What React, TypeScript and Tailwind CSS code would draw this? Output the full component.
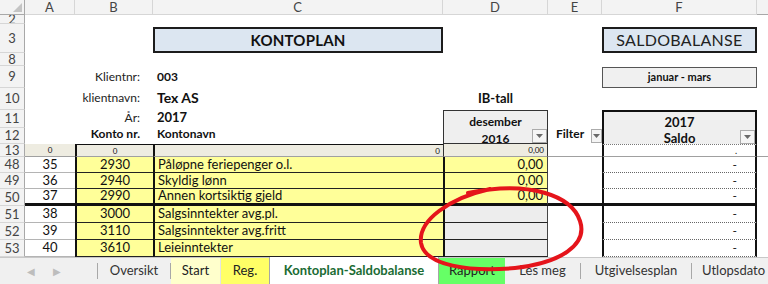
import React from 'react';

const ROWS = [
  { r: 48, a: 35, b: 2930, c: 'Påløpne feriepenger o.l.', d: '0,00' },
  { r: 49, a: 36, b: 2940, c: 'Skyldig lønn', d: '0,00' },
  { r: 50, a: 37, b: 2990, c: 'Annen kortsiktig gjeld', d: '0,00', thick: true },
  { r: 51, a: 38, b: 3000, c: 'Salgsinntekter avg.pl.' },
  { r: 52, a: 39, b: 3110, c: 'Salgsinntekter avg.fritt' },
  { r: 53, a: 40, b: 3610, c: 'Leieinntekter' },
];

const ROW_LABELS = ['2', '3', '8', '9', '10', '11', '12', '13'];

const ROW_START = [
  'row-start-2', 'row-start-3', 'row-start-4', 'row-start-5', 'row-start-6', 'row-start-7', 'row-start-8',
  'row-start-9', 'row-start-10', 'row-start-11', 'row-start-12', 'row-start-13', 'row-start-14', 'row-start-15',
];

function Dropdown() {
  return (
    <div className="w-[15px] h-[14px] border border-[#ababab] bg-[#f5f5f5] flex items-center justify-center">
      <svg width="7" height="4" viewBox="0 0 7 4">
        <path d="M0 0h7L3.5 4z" fill="#6a6a6a" />
      </svg>
    </div>
  );
}

function ColHeader({ label, last }: { label: string; last?: boolean }) {
  return (
    <div
      className={`row-start-1 bg-[#f3f3f3] border-b border-[#a8a8a8] ${last ? '' : 'border-r border-[#d6d6d6]'} flex items-center justify-center text-[13px] leading-none text-[#444]`}
    >
      {label}
    </div>
  );
}

export default function App() {
  const labels = [...ROW_LABELS, ...ROWS.map(r => String(r.r))];

  return (
    <div className="relative w-[768px] h-[284px] overflow-hidden bg-white font-['Lato',sans-serif] text-[#111]">
      {/* Sheet */}
      <div className="grid grid-cols-[25px_50px_78px_290px_105px_54px_155px_11px] grid-rows-[15px_9px_29px_13px_22px_22px_18px_16px_13px_16px_16px_17px_17px_17px_17px] h-[257px]">
        {/* column headers */}
        <div className="row-start-1 col-start-1 bg-[#f3f3f3] border-b border-r border-[#a8a8a8] relative">
          <svg className="absolute right-[2px] bottom-[2px]" width="9" height="9" viewBox="0 0 9 9">
            <path d="M9 0V9H0z" fill="#c4c4c4" />
          </svg>
        </div>
        <ColHeader label="A" />
        <ColHeader label="B" />
        <ColHeader label="C" />
        <ColHeader label="D" />
        <ColHeader label="E" />
        <ColHeader label="F" />
        <ColHeader label="" last />

        {/* row headers */}
        {labels.map((l, i) => (
          <div
            key={l}
            className={`${ROW_START[i]} col-start-1 bg-[#f3f3f3] border-r border-[#a8a8a8] border-b border-b-[#d6d6d6] flex items-center justify-center overflow-hidden text-[13px] leading-none text-[#444]`}
          >
            {l}
          </div>
        ))}

        {/* row 3 */}
        <div className="row-start-3 col-start-4 mt-[3px] border-2 border-[#1c1c1c] bg-[#dce6f1] flex items-center justify-center text-[15px] font-bold tracking-[0.2px]">
          KONTOPLAN
        </div>
        <div className="row-start-3 col-start-7 mt-[3px] border-2 border-[#1c1c1c] bg-[#dce6f1] flex items-center justify-center text-[16px] tracking-[0.3px] text-[#222]">
          SALDOBALANSE
        </div>

        {/* row 9 */}
        <div className="row-start-5 col-start-3 flex items-end justify-end pr-[13px] pb-[2px] text-[12px] text-[#222]">Klientnr:</div>
        <div className="row-start-5 col-start-4 flex items-end pl-[4px] pb-[2px] text-[12px] font-bold">003</div>
        <div className="row-start-5 col-start-7 mt-[1px] border border-[#555] bg-[#f0f0f0] flex items-center justify-center text-[11px] font-bold">
          januar - mars
        </div>

        {/* row 10 */}
        <div className="row-start-6 col-start-3 flex items-end justify-end pr-[13px] pb-[3px] text-[12px] text-[#222]">klientnavn:</div>
        <div className="row-start-6 col-start-4 flex items-end pl-[4px] pb-[2px] text-[14px] font-bold">Tex AS</div>
        <div className="row-start-6 col-start-5 flex items-end justify-center pb-[2px] text-[13px] font-bold">IB-tall</div>

        {/* row 11 */}
        <div className="row-start-7 col-start-3 flex items-end justify-end pr-[13px] pb-[1px] text-[12px] text-[#222]">År:</div>
        <div className="row-start-7 col-start-4 flex items-end pl-[4px] pb-[1px] text-[13px] font-bold">2017</div>

        {/* D header box rows 11-12 */}
        <div className="row-start-7 row-span-2 col-start-5 relative border border-[#333] bg-[#efefef] flex flex-col items-center pt-[2px] text-[12px] font-bold leading-[17px]">
          <span>desember</span>
          <span>2016</span>
          <div className="absolute right-0 bottom-0">
            <Dropdown />
          </div>
        </div>

        {/* F header box rows 11-12 */}
        <div className="row-start-7 row-span-2 col-start-7 relative border-t-2 border-x-2 border-[#111] bg-[#efefef] flex flex-col items-center pt-[2px] text-[13px] font-bold leading-[16px]">
          <span>2017</span>
          <span>Saldo</span>
          <div className="absolute right-0 bottom-0">
            <Dropdown />
          </div>
        </div>

        {/* row 12 */}
        <div className="row-start-8 col-start-3 flex items-end justify-end pr-[13px] pb-[1px] text-[12px] font-bold">Konto nr.</div>
        <div className="row-start-8 col-start-4 flex items-end pl-[4px] pb-[1px] text-[12px] font-bold">Kontonavn</div>
        <div className="row-start-8 col-start-6 flex items-end gap-[7px] pl-[8px] pb-[1px] text-[12px] font-bold">
          <span>Filter</span>
          <Dropdown />
        </div>

        {/* row 13 */}
        <div className="row-start-9 col-start-2 bg-[#eeece1] border-b border-[#a0a0a0] flex items-center justify-center text-[8px]">0</div>
        <div className="row-start-9 col-start-3 bg-[#eeece1] border-l-2 border-t border-[#111] border-b border-b-[#a0a0a0] flex items-center justify-center text-[8px]">0</div>
        <div className="row-start-9 col-start-4 bg-[#eeece1] border-l-2 border-t border-[#111] border-b border-b-[#a0a0a0] flex items-center justify-end pr-[3px] text-[8px]">0</div>
        <div className="row-start-9 col-start-5 bg-[#eeece1] border-l border-r border-[#333] border-b border-b-[#a0a0a0] flex items-center justify-end pr-[3px] text-[8px]">0,00</div>
        <div className="row-start-9 col-start-6 border-b border-[#a0a0a0]" />
        <div className="row-start-9 col-start-7 border-x-2 border-[#111] border-t border-t-[#777] [border-top-style:dotted] border-b border-b-[#a0a0a0] flex items-center justify-end pr-[18px] text-[9px] leading-none">.</div>
        <div className="row-start-9 col-start-8 border-b border-[#a0a0a0]" />

        {/* data rows */}
        {ROWS.map((row, i) => {
          const rs = ROW_START[8 + i];
          const bottom = row.thick ? 'border-b-[3px] border-b-[#111]' : '';
          return (
            <React.Fragment key={row.r}>
              <div className={`${rs} col-start-2 flex items-center justify-center text-[13px] ${row.thick ? bottom : 'border-b border-b-[#b4b4b4]'}`}>{row.a}</div>
              <div className={`${rs} col-start-3 bg-[#ffff99] border-l-2 border-l-[#111] flex items-center justify-center text-[13px] ${row.thick ? bottom : 'border-b border-b-[#222]'}`}>{row.b}</div>
              <div className={`${rs} col-start-4 bg-[#ffff99] border-l-2 border-l-[#111] flex items-center pl-[3px] text-[13px] whitespace-nowrap ${row.thick ? bottom : 'border-b border-b-[#222]'}`}>{row.c}</div>
              <div className={`${rs} col-start-5 ${row.d ? 'bg-[#ffff99]' : 'bg-[#ededed]'} border-l-2 border-l-[#111] border-r border-r-[#444] flex items-center justify-end pr-[4px] text-[13px] ${row.thick ? bottom : 'border-b border-b-[#222]'}`}>{row.d}</div>
              <div className={`${rs} col-start-6 ${bottom}`} />
              <div className={`${rs} col-start-7 border-x-2 border-x-[#111] flex items-center justify-end pr-[18px] text-[12px] ${row.thick ? bottom : 'border-b border-b-[#666] [border-bottom-style:dotted]'}`}>-</div>
            </React.Fragment>
          );
        })}
      </div>

      {/* sheet tabs */}
      <div className="flex h-[27px] bg-[#f0f0f0] border-t border-[#c8c8c8] text-[13px] text-[#333]">
        <div className="w-[97px] flex items-center gap-[18px] pl-[27px] text-[#bdbdbd] text-[10px]">
          <span>◀</span>
          <span>▶</span>
        </div>
        <div className="w-px my-[5px] bg-[#a8a8a8]" />
        <div className="w-[72px] flex items-center justify-center">Oversikt</div>
        <div className="w-px my-[5px] bg-[#a8a8a8]" />
        <div className="w-[49px] flex items-center justify-center bg-[#ffffcc] text-[#222]">Start</div>
        <div className="w-px bg-[#e4e4e4]" />
        <div className="w-[48px] flex items-center justify-center bg-[#ffff66] text-[#222]">Reg.</div>
        <div className="w-[170px] flex items-center justify-center bg-white border-x border-[#a6a6a6] font-bold text-[#1a6b33] -mt-px">
          Kontoplan-Saldobalanse
        </div>
        <div className="w-[66px] flex items-center justify-center bg-[#66ff66] text-[#222]">Rapport</div>
        <div className="w-[75px] flex items-center justify-center">Les meg</div>
        <div className="w-px my-[5px] bg-[#a8a8a8]" />
        <div className="w-[110px] flex items-center justify-center">Utgivelsesplan</div>
        <div className="w-px my-[5px] bg-[#a8a8a8]" />
        <div className="flex-1 flex items-center pl-[10px] whitespace-nowrap">Utlopsdato</div>
      </div>

      {/* red hand-drawn ellipse */}
      <svg className="absolute left-0 top-0 pointer-events-none" width="768" height="284" viewBox="0 0 768 284">
        <path
          d="M490 189 C450 198 418 220 421 243 C425 266 470 272 515 268 C560 263 588 245 580 221 C572 196 530 180 468 193"
          fill="none"
          stroke="#e5141b"
          strokeWidth="4"
          strokeLinecap="round"
        />
      </svg>
    </div>
  );
}
